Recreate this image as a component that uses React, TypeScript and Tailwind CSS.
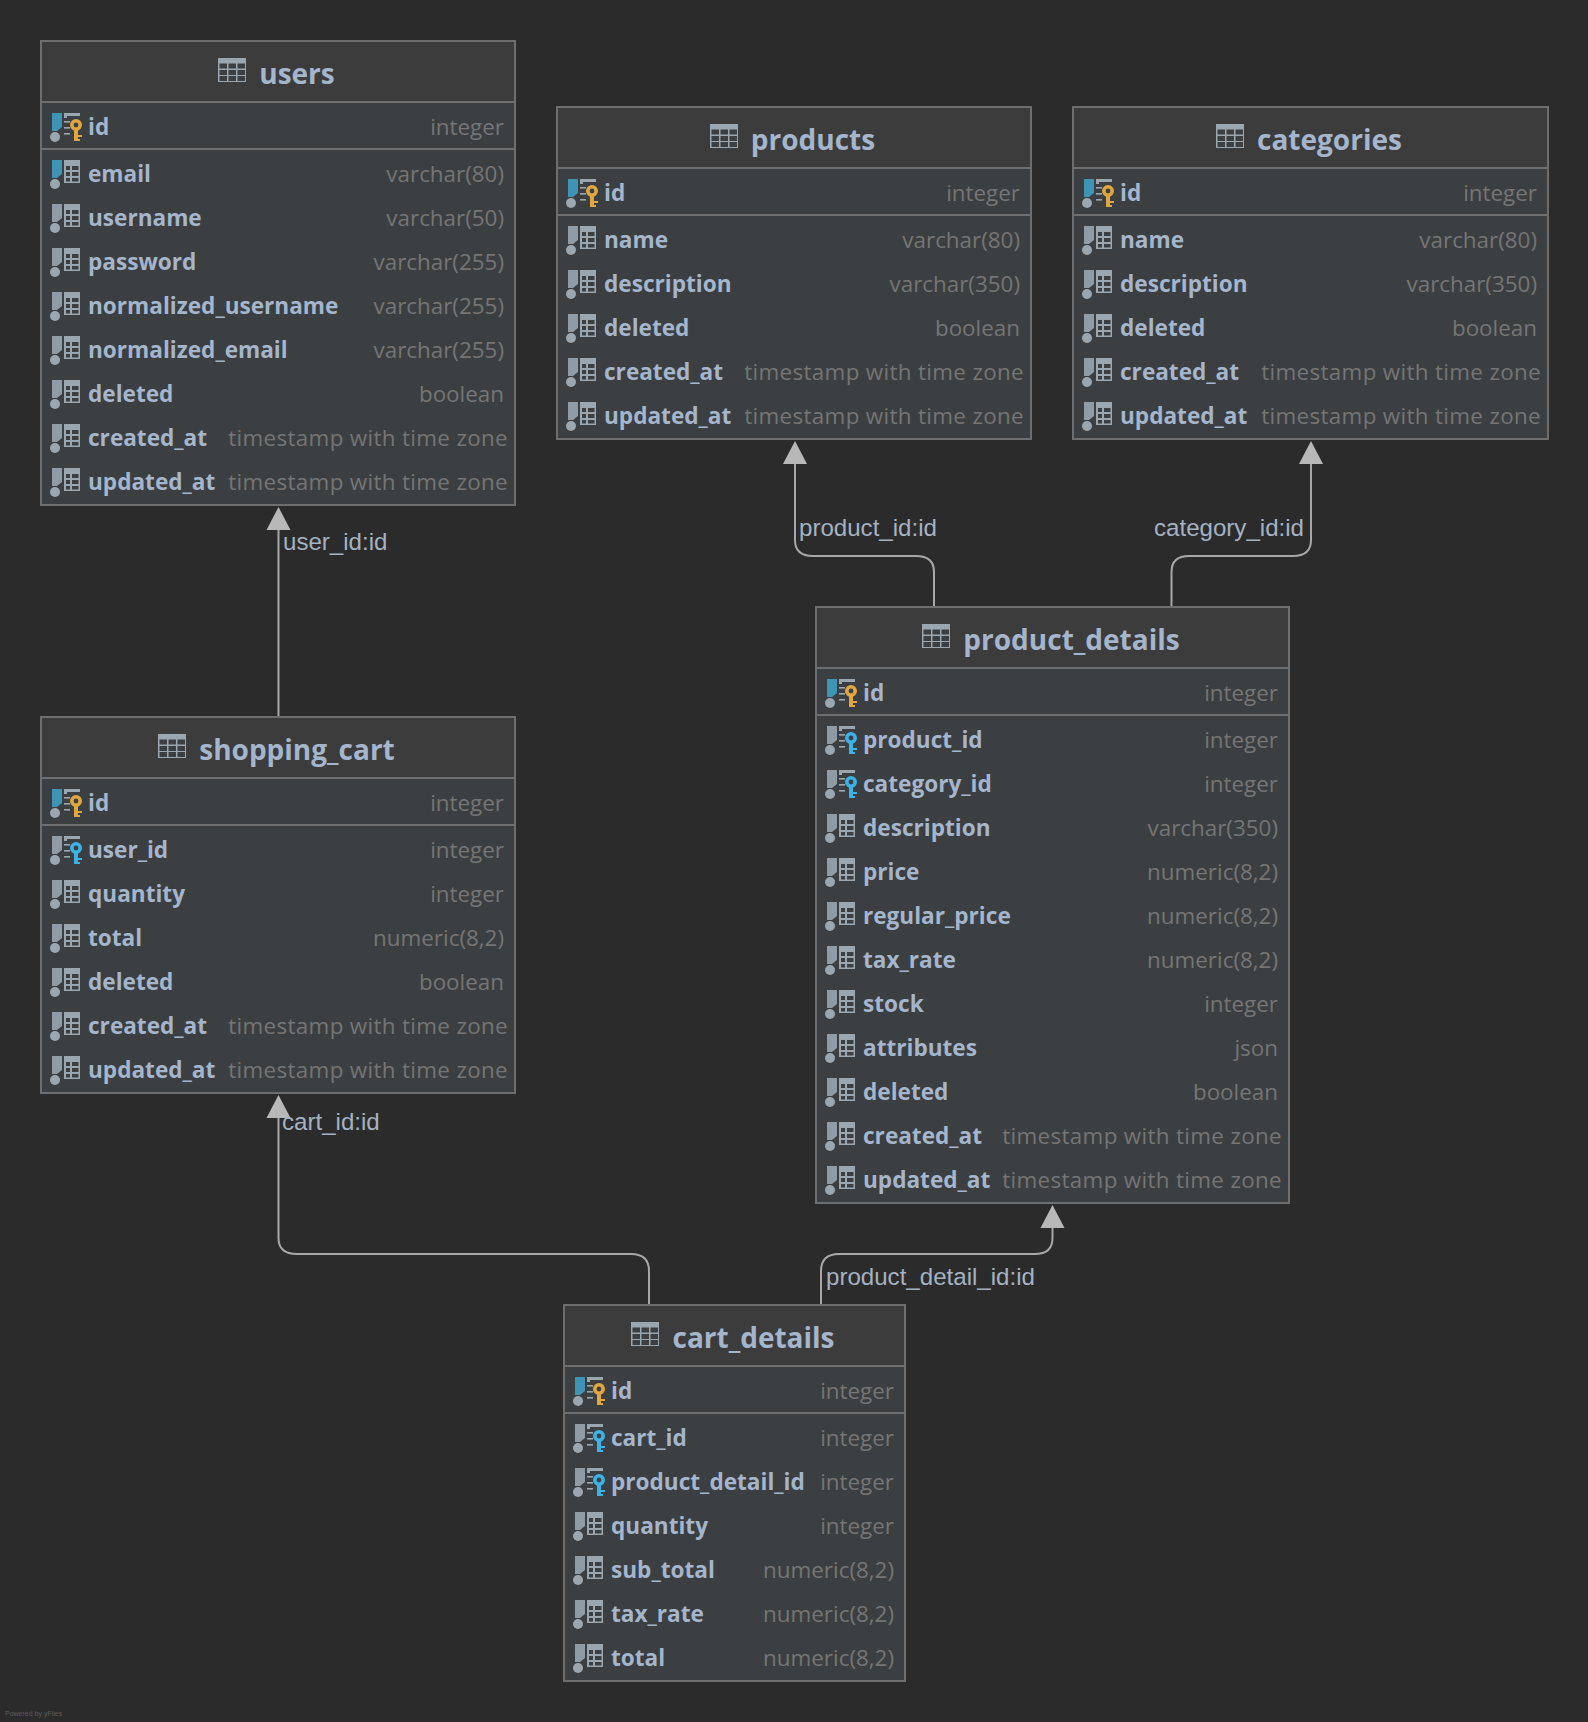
import React from "react";

type Col = { n: string; t: string; blue?: boolean; fk?: boolean };

const FONT = "font-['Open_Sans','Noto_Sans',sans-serif]";

function HeaderIcon() {
  return (
    <svg width="28" height="24" viewBox="0 0 28 24" className="shrink-0 -mt-[6px]">
      <rect width="28" height="24" fill="#9aa7b0" />
      {[1.5, 10.5, 19.5].map((x) =>
        [5.5, 12, 18].map((y) => (
          <rect key={x + "-" + y} x={x} y={y} width="7.5" height="5" fill="#3c3f41" />
        ))
      )}
    </svg>
  );
}

function ColumnIcon({ blue, keyColor }: { blue?: boolean; keyColor?: string }) {
  const mark = blue ? "#3f94b5" : "#8f9ca5";
  return (
    <svg width="32" height="30" viewBox="0 0 32 30" className="shrink-0">
      <path d="M2 1h10v14l-5 4H2z" fill={mark} />
      <circle cx="5" cy="25" r="5" fill="#9aa7b0" />
      {keyColor ? (
        <>
          <rect x="14" y="1" width="16" height="3" fill="#9aa7b0" />
          <rect x="14" y="4" width="3" height="2" fill="#9aa7b0" />
          <rect x="14" y="9" width="6" height="1.6" fill="#9aa7b0" />
          <rect x="14" y="15" width="6" height="1.6" fill="#9aa7b0" />
          <rect x="14" y="21" width="6" height="1.6" fill="#9aa7b0" />
          <circle cx="26" cy="13" r="4.2" fill="none" stroke={keyColor} strokeWidth="3.6" />
          <path d="M24 17h4v6h4v2h-4v2h2v2h-6z" fill={keyColor} />
        </>
      ) : (
        <>
          <rect x="14" y="1" width="16" height="23" fill="#9aa7b0" />
          <rect x="16" y="7" width="4" height="4" fill="#3c3f41" />
          <rect x="16" y="13" width="4" height="4" fill="#3c3f41" />
          <rect x="16" y="19" width="4" height="3.5" fill="#3c3f41" />
          <rect x="22" y="7" width="6.5" height="4" fill="#3c3f41" />
          <rect x="22" y="13" width="6.5" height="4" fill="#3c3f41" />
          <rect x="22" y="19" width="6.5" height="3.5" fill="#3c3f41" />
        </>
      )}
    </svg>
  );
}

function Row({ c, keyColor }: { c: Col; keyColor?: string }) {
  const stamp = c.t === ts;
  return (
    <div className="flex items-center pl-[8px] pr-[10px]">
      <ColumnIcon blue={c.blue} keyColor={keyColor} />
      <span className="ml-[6px] whitespace-nowrap text-[22.6px] font-bold text-[#a4b5cc]">{c.n}</span>
      <span
        className={
          "ml-auto whitespace-nowrap text-[22.4px] font-normal text-[#757575] " +
          (stamp ? "-mr-[4px] tracking-[0.33px]" : "")
        }
      >
        {c.t}
      </span>
    </div>
  );
}

function Table({
  name,
  cols,
  pos,
}: {
  name: string;
  cols: Col[];
  pos: string;
}) {
  const [id, ...rest] = cols;
  return (
    <div className={"absolute border-2 border-[#6e6e6e] bg-[#3c3f41] " + pos}>
      <div className="flex h-[61px] items-center justify-center gap-[13px] border-b-2 border-[#6e6e6e] bg-[#3c3c3c] pr-[3px] pt-[2px]">
        <HeaderIcon />
        <span className="text-[28px] font-bold leading-none text-[#a4b5cc]">{name}</span>
      </div>
      <div className="grid h-[47px] items-center border-b-2 border-[#6e6e6e] pt-[3px]">
        <Row c={{ ...id, blue: true }} keyColor="#e0a640" />
      </div>
      <div className="grid auto-rows-[44px] items-center pt-[2px]">
        {rest.map((c) => (
          <Row key={c.n} c={c} keyColor={c.fk ? "#3db2e6" : undefined} />
        ))}
      </div>
    </div>
  );
}

const ts = "timestamp with time zone";
const stamps: Col[] = [
  { n: "created_at", t: ts },
  { n: "updated_at", t: ts },
];

const users: Col[] = [
  { n: "id", t: "integer" },
  { n: "email", t: "varchar(80)", blue: true },
  { n: "username", t: "varchar(50)" },
  { n: "password", t: "varchar(255)" },
  { n: "normalized_username", t: "varchar(255)" },
  { n: "normalized_email", t: "varchar(255)" },
  { n: "deleted", t: "boolean" },
  ...stamps,
];

const products: Col[] = [
  { n: "id", t: "integer" },
  { n: "name", t: "varchar(80)" },
  { n: "description", t: "varchar(350)" },
  { n: "deleted", t: "boolean" },
  ...stamps,
];

const details: Col[] = [
  { n: "id", t: "integer" },
  { n: "product_id", t: "integer", fk: true },
  { n: "category_id", t: "integer", fk: true },
  { n: "description", t: "varchar(350)" },
  { n: "price", t: "numeric(8,2)" },
  { n: "regular_price", t: "numeric(8,2)" },
  { n: "tax_rate", t: "numeric(8,2)" },
  { n: "stock", t: "integer" },
  { n: "attributes", t: "json" },
  { n: "deleted", t: "boolean" },
  ...stamps,
];

const cart: Col[] = [
  { n: "id", t: "integer" },
  { n: "user_id", t: "integer", fk: true },
  { n: "quantity", t: "integer" },
  { n: "total", t: "numeric(8,2)" },
  { n: "deleted", t: "boolean" },
  ...stamps,
];

const cartDetails: Col[] = [
  { n: "id", t: "integer" },
  { n: "cart_id", t: "integer", fk: true },
  { n: "product_detail_id", t: "integer", fk: true },
  { n: "quantity", t: "integer" },
  { n: "sub_total", t: "numeric(8,2)" },
  { n: "tax_rate", t: "numeric(8,2)" },
  { n: "total", t: "numeric(8,2)" },
];

function Edges() {
  const line = { fill: "none", stroke: "#a8a8a8", strokeWidth: 2 };
  const head = "#b8b8b8";
  return (
    <svg width="1588" height="1722" viewBox="0 0 1588 1722" className="absolute left-0 top-0">
      <path d="M278.5 716V520" {...line} />
      <path d="M278.5 507l12 23h-24z" fill={head} />
      <path d="M934 606V572Q934 556 916 556H813Q795 556 795 540V460" {...line} />
      <path d="M795 441l12 23h-24z" fill={head} />
      <path d="M1171.5 606V572Q1171.5 556 1189 556H1293Q1311 556 1311 540V460" {...line} />
      <path d="M1311 441l12 23h-24z" fill={head} />
      <path d="M649 1305V1271Q649 1254 631 1254H297Q278.5 1254 278.5 1238V1115" {...line} />
      <path d="M278.5 1095l12 23h-24z" fill={head} />
      <path d="M821 1305V1271Q821 1254 839 1254H1035Q1052.5 1254 1052.5 1238V1225" {...line} />
      <path d="M1052.5 1205l12 23h-24z" fill={head} />
    </svg>
  );
}

function Label({ text, pos }: { text: string; pos: string }) {
  return (
    <span
      className={
        "absolute whitespace-nowrap font-['Liberation_Sans',Arial,sans-serif] text-[24.1px] leading-[28px] text-[#a4b2c2] " +
        pos
      }
    >
      {text}
    </span>
  );
}

export default function App() {
  return (
    <div className={"relative h-[1722px] w-[1588px] overflow-hidden bg-[#2b2b2b] " + FONT}>
      <Edges />
      <Table name="users" cols={users} pos="left-[40px] top-[40px] w-[476px]" />
      <Table name="products" cols={products} pos="left-[556px] top-[106px] w-[476px]" />
      <Table name="categories" cols={products} pos="left-[1072px] top-[106px] w-[477px]" />
      <Table name="product_details" cols={details} pos="left-[815px] top-[606px] w-[475px]" />
      <Table name="shopping_cart" cols={cart} pos="left-[40px] top-[716px] w-[476px]" />
      <Table name="cart_details" cols={cartDetails} pos="left-[563px] top-[1304px] w-[343px]" />
      <Label text="user_id:id" pos="left-[283px] top-[528px]" />
      <Label text="product_id:id" pos="left-[799px] top-[514px]" />
      <Label text="category_id:id" pos="left-[1154px] top-[514px]" />
      <Label text="cart_id:id" pos="left-[282px] top-[1108px]" />
      <Label text="product_detail_id:id" pos="left-[826px] top-[1263px]" />
      <span className="absolute left-[5px] top-[1710px] font-['Liberation_Sans',Arial,sans-serif] text-[7px] leading-[8px] text-[#5a5a5a]">
        Powered by yFiles
      </span>
    </div>
  );
}
